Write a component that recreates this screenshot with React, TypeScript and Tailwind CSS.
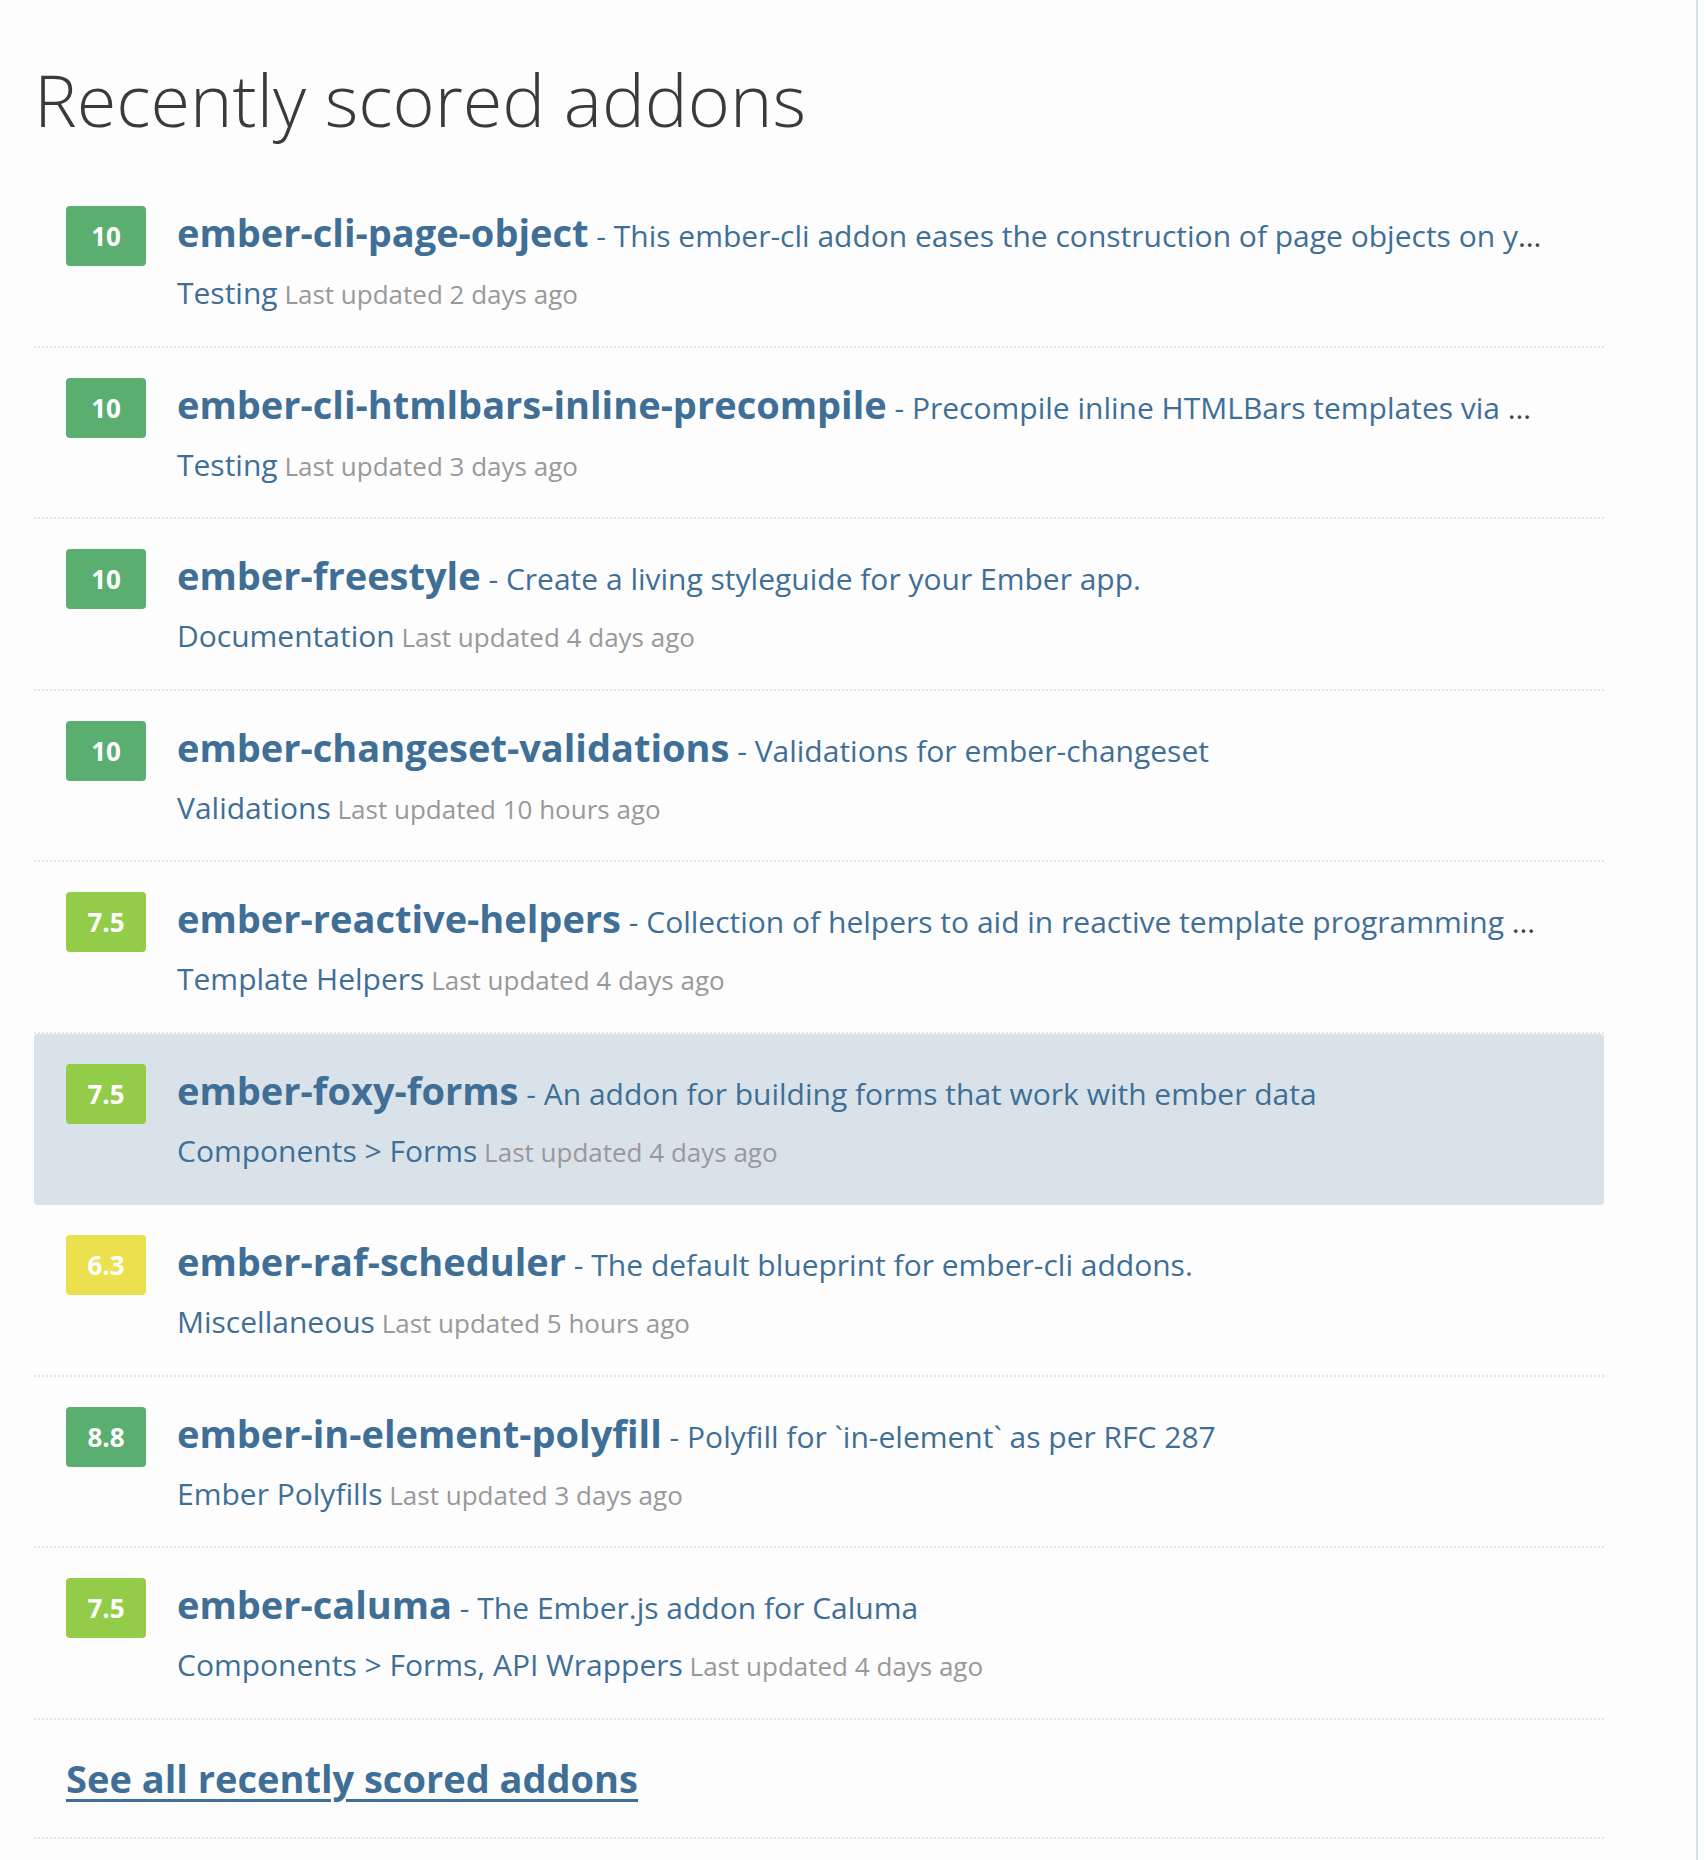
const addons = [
  {
    score: '10',
    tone: 'bg-[#5aaf70]',
    name: 'ember-cli-page-object',
    description: 'This ember-cli addon eases the construction of page objects on your acceptance and integration tests',
    category: 'Testing',
    updated: '2 days ago',
  },
  {
    score: '10',
    tone: 'bg-[#5aaf70]',
    name: 'ember-cli-htmlbars-inline-precompile',
    description: 'Precompile inline HTMLBars templates via ES6 tagged template strings',
    category: 'Testing',
    updated: '3 days ago',
  },
  {
    score: '10',
    tone: 'bg-[#5aaf70]',
    name: 'ember-freestyle',
    description: 'Create a living styleguide for your Ember app.',
    category: 'Documentation',
    updated: '4 days ago',
  },
  {
    score: '10',
    tone: 'bg-[#5aaf70]',
    name: 'ember-changeset-validations',
    description: 'Validations for ember-changeset',
    category: 'Validations',
    updated: '10 hours ago',
  },
  {
    score: '7.5',
    tone: 'bg-[#93cc48]',
    name: 'ember-reactive-helpers',
    description: 'Collection of helpers to aid in reactive template programming with Ember',
    category: 'Template Helpers',
    updated: '4 days ago',
  },
  {
    score: '7.5',
    tone: 'bg-[#93cc48]',
    name: 'ember-foxy-forms',
    description: 'An addon for building forms that work with ember data',
    category: 'Components > Forms',
    updated: '4 days ago',
    active: true,
  },
  {
    score: '6.3',
    tone: 'bg-[#ebe14f]',
    name: 'ember-raf-scheduler',
    description: 'The default blueprint for ember-cli addons.',
    category: 'Miscellaneous',
    updated: '5 hours ago',
  },
  {
    score: '8.8',
    tone: 'bg-[#5aaf70]',
    name: 'ember-in-element-polyfill',
    description: 'Polyfill for `in-element` as per RFC 287',
    category: 'Ember Polyfills',
    updated: '3 days ago',
  },
  {
    score: '7.5',
    tone: 'bg-[#93cc48]',
    name: 'ember-caluma',
    description: 'The Ember.js addon for Caluma',
    category: 'Components > Forms, API Wrappers',
    updated: '4 days ago',
  },
];

export default function App() {
  return (
    <div className="min-h-screen bg-white font-['Open_Sans',sans-serif]">
      <div className="w-[1698px] min-h-[1860px] border-r-2 border-[#d6e0e8] bg-[#fdfdfd] pl-[34px] pr-[92px] pt-[63px]">
        <h1 className="mb-[41px] text-[72px] leading-[72px] font-light text-[#3a3a3a]">
          Recently scored addons
        </h1>

        <ul>
          {addons.map((addon) => (
            <li
              key={addon.name}
              className={`flex border-b-2 border-dotted pl-[32px] pr-[59px] pt-[30px] pb-[31.5px] ${
                addon.active ? 'rounded-[4px] border-transparent bg-[#d9e2e9]' : 'border-[#dfe5ea]'
              }`}
            >
              <div
                className={`flex h-[60px] w-[80px] shrink-0 items-center justify-center rounded-[4px] text-[26px] leading-none font-bold text-white ${addon.tone}`}
              >
                {addon.score}
              </div>

              <div className="ml-[31px] min-w-0 flex-1 pt-[4px]">
                <div className="overflow-hidden text-ellipsis whitespace-nowrap text-[30px] leading-[52px] text-[#444]">
                  <a href="#" className="text-[38px] leading-none font-bold text-[#3f6f97]">
                    {addon.name}
                  </a>
                  <span className="leading-none text-[#3f6f97]"> - {addon.description}</span>
                </div>
                <div className="mt-[10px] text-[30px] leading-[42px]">
                  <a href="#" className="leading-none text-[#3f6f97]">
                    {addon.category}
                  </a>
                  <span className="text-[26px] leading-none text-[#999]"> Last updated {addon.updated}</span>
                </div>
              </div>
            </li>
          ))}

          <li className="border-b-2 border-dotted border-[#dfe5ea] pl-[32px] pt-[32px] pb-[33px] text-[38px] leading-[52px]">
            <a
              href="#"
              className="font-bold text-[#3f6f97] underline decoration-[3px] underline-offset-[6px]"
            >
              See all recently scored addons
            </a>
          </li>
        </ul>
      </div>
    </div>
  );
}
